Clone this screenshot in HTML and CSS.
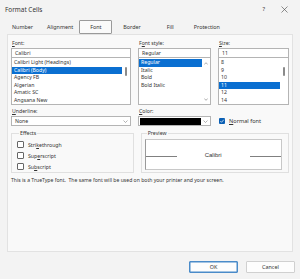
FILE: index.html
```html
<!DOCTYPE html>
<html lang="en">
<head>
    <meta charset="UTF-8">
    <meta name="viewport" content="width=device-width, initial-scale=1.0">
    <title>Format Cells</title>
    <link rel="stylesheet" href="styles.css">
</head>
<body>
    <div class="dialog">
        <div class="titlebar">
            <span class="title">Format Cells</span>
            <span class="help">?</span>
            <span class="close">
                <svg width="7" height="7" viewBox="0 0 7 7"><path d="M0.5 0.5 L6.5 6.5 M6.5 0.5 L0.5 6.5" stroke="#444" stroke-width="0.6" fill="none"/></svg>
            </span>
        </div>

        <div class="tabs">
            <span class="tab tab-number">Number</span>
            <span class="tab tab-align">Alignment</span>
            <span class="tab tab-font active">Font</span>
            <span class="tab tab-border">Border</span>
            <span class="tab tab-fill">Fill</span>
            <span class="tab tab-protect">Protection</span>
        </div>

        <div class="panel">
            <div class="fields">
                <div class="field">
                    <label><u>F</u>ont:</label>
                    <div class="input">Calibri</div>
                    <div class="list">
                        <ul>
                            <li>Calibri Light (Headings)</li>
                            <li class="selected">Calibri (Body)</li>
                            <li>Agency FB</li>
                            <li>Algerian</li>
                            <li>Amatic SC</li>
                            <li>Angsana New</li>
                        </ul>
                        <div class="scroll"><span class="thumb"></span></div>
                    </div>
                </div>
                <div class="field">
                    <label>F<u>o</u>nt style:</label>
                    <div class="input">Regular</div>
                    <div class="list">
                        <ul>
                            <li class="selected">Regular</li>
                            <li>Italic</li>
                            <li>Bold</li>
                            <li>Bold Italic</li>
                        </ul>
                        <div class="scroll arrows">
                            <svg width="4" height="3" viewBox="0 0 4 3"><path d="M0.3 2.5 L2 0.7 L3.7 2.5" stroke="#777" stroke-width="0.6" fill="none"/></svg>
                            <svg width="4" height="3" viewBox="0 0 4 3"><path d="M0.3 0.5 L2 2.3 L3.7 0.5" stroke="#777" stroke-width="0.6" fill="none"/></svg>
                        </div>
                    </div>
                </div>
                <div class="field">
                    <label><u>S</u>ize:</label>
                    <div class="input">11</div>
                    <div class="list">
                        <ul>
                            <li>8</li>
                            <li>9</li>
                            <li>10</li>
                            <li class="selected">11</li>
                            <li>12</li>
                            <li>14</li>
                        </ul>
                        <div class="scroll"><span class="thumb"></span></div>
                    </div>
                </div>
            </div>

            <div class="fields second">
                <div class="field">
                    <label><u>U</u>nderline:</label>
                    <div class="input select">
                        <span>None</span>
                        <svg width="5" height="3" viewBox="0 0 5 3"><path d="M0.5 0.5 L2.5 2.5 L4.5 0.5" stroke="#666" stroke-width="0.5" fill="none"/></svg>
                    </div>
                </div>
                <div class="field">
                    <label><u>C</u>olor:</label>
                    <div class="input select">
                        <span class="swatch"></span>
                        <svg width="5" height="3" viewBox="0 0 5 3"><path d="M0.5 0.5 L2.5 2.5 L4.5 0.5" stroke="#666" stroke-width="0.5" fill="none"/></svg>
                    </div>
                </div>
                <div class="field normal">
                    <span class="check">
                        <svg width="6" height="6" viewBox="0 0 6 6"><path d="M1.3 3.1 L2.5 4.3 L4.8 1.7" stroke="#fff" stroke-width="0.7" fill="none"/></svg>
                    </span>
                    <span><u>N</u>ormal font</span>
                </div>
            </div>

            <div class="groups">
                <fieldset class="effects">
                    <legend>Effects</legend>
                    <div class="option"><span class="box"></span>Stri<u>k</u>ethrough</div>
                    <div class="option"><span class="box"></span>Sup<u>e</u>rscript</div>
                    <div class="option"><span class="box"></span>Su<u>b</u>script</div>
                </fieldset>
                <fieldset class="preview">
                    <legend>Preview</legend>
                    <div class="sample">
                        <span class="line"></span>
                        <span class="sample-text">Calibri</span>
                        <span class="line"></span>
                    </div>
                </fieldset>
            </div>

            <p class="note">This is a TrueType font.&nbsp; The same font will be used on both your printer and your screen.</p>
        </div>

        <div class="buttons">
            <button class="btn default">OK</button>
            <button class="btn">Cancel</button>
        </div>
    </div>
</body>
</html>
```

FILE: styles.css
```css
body {
    margin: 0;
    font-family: 'Noto Sans', 'Open Sans', sans-serif;
    font-size: 5.2px;
    color: #333;
    background: #f3f3f3;
}

.dialog {
    width: 300px;
    height: 279px;
    overflow: hidden;
    background: #f3f3f3;
}

.titlebar {
    height: 18px;
    display: flex;
    align-items: center;
    padding: 0 5px;
}

.title {
    font-size: 6.4px;
    flex: 1;
}

.help {
    font-size: 6px;
    margin-right: 16px;
}

.close {
    display: flex;
    margin-right: 7px;
}

.tabs {
    height: 16px;
    display: flex;
    align-items: center;
    padding-left: 12px;
    padding-top: 2px;
    box-sizing: border-box;
}

.tab {
    font-size: 5.4px;
}

.tab-align { margin-left: 14px; }
.tab-border { margin-left: 11px; }
.tab-fill { margin-left: 26px; }
.tab-protect { margin-left: 20px; }

.tab-font {
    margin-left: 6px;
    width: 31px;
    height: 12px;
    line-height: 12px;
    text-align: center;
    background: #fafafa;
    border: 1px solid #9a9a9a;
    border-radius: 1px;
}

.panel {
    margin: 0 7px 0 7px;
    height: 218px;
    box-sizing: border-box;
    background: #f9f9f9;
    border: 1px solid #e2e2e2;
    padding: 4px 3px 0 3px;
}

.fields {
    display: grid;
    grid-template-columns: 120px 73px 71px;
    column-gap: 7px;
}

.fields.second {
    margin-top: 2px;
}

.field label {
    display: block;
    height: 9px;
    line-height: 8px;
    padding-left: 1px;
}

.input {
    height: 10px;
    box-sizing: border-box;
    border: 1px solid #b4b4b4;
    background: #fff;
    line-height: 8px;
    padding-left: 3px;
}

.list {
    position: relative;
    height: 47px;
    box-sizing: border-box;
    border: 1px solid #b4b4b4;
    border-top: none;
    background: #fff;
    display: flex;
}

.list ul {
    list-style: none;
    margin: 0;
    padding: 1px 0 0 0;
    flex: 1;
}

.list li {
    height: 7.5px;
    line-height: 7.5px;
    padding-left: 2px;
    white-space: nowrap;
}

.list li.selected {
    background: #0a6fd1;
    color: #fff;
}

.scroll {
    width: 8px;
    display: flex;
    justify-content: center;
}

.thumb {
    margin-top: 9px;
    width: 2px;
    height: 9px;
    background: #8a8a8a;
    border-radius: 1px;
}

.scroll.arrows {
    flex-direction: column;
    justify-content: space-between;
    align-items: center;
    padding: 4px 0 3px 0;
}

.select {
    display: flex;
    align-items: center;
    justify-content: space-between;
    padding-right: 2px;
}

.swatch {
    width: 61px;
    height: 7px;
    margin-left: -2px;
    background: #000;
}

.normal {
    display: flex;
    align-items: center;
    align-self: end;
    height: 10px;
    font-size: 5.6px;
}

.check {
    width: 6px;
    height: 6px;
    margin: 0 4px 0 1px;
    background: #0a5fb4;
    border-radius: 1px;
    display: flex;
}

.groups {
    display: flex;
    margin-top: 4px;
    gap: 7px;
}

fieldset {
    margin: 0;
    padding: 0;
    border: 1px solid #e0e0e0;
    box-sizing: border-box;
    height: 43px;
}

legend {
    padding: 0 1px;
    margin-left: 2px;
    line-height: 6px;
}

.effects {
    width: 124px;
    padding: 3px 0 0 5px;
}

.option {
    display: flex;
    align-items: center;
    height: 11px;
}

.box {
    width: 5px;
    height: 5px;
    border: 1px solid #666;
    border-radius: 1px;
    margin-right: 4px;
    background: #fff;
}

.preview {
    width: 150px;
    padding: 3px 0 0 3px;
}

.sample {
    width: 137px;
    height: 31px;
    box-sizing: border-box;
    border: 1px solid #c8c8c8;
    border-left-color: #9a9a9a;
    background: #fff;
    display: flex;
    align-items: center;
}

.line {
    flex: 1;
    height: 1px;
    background: #808080;
    margin-top: 3px;
}

.sample-text {
    font-family: 'Liberation Sans', 'Noto Sans', sans-serif;
    font-size: 6px;
    padding: 0 28px;
}

.note {
    margin: 4px 0 0 0;
    white-space: nowrap;
    font-size: 5.1px;
}

.buttons {
    display: flex;
    justify-content: flex-end;
    gap: 8px;
    padding: 9px 5px 0 0;
}

.btn {
    width: 49px;
    height: 12px;
    padding: 0;
    font-family: inherit;
    font-size: 5.4px;
    color: #333;
    background: #fdfdfd;
    border: 1px solid #d0d0d0;
    border-radius: 1px;
}

.btn.default {
    border-color: #4a8bc9;
    box-shadow: inset 0 0 0 0.5px #4a8bc9;
}
```
